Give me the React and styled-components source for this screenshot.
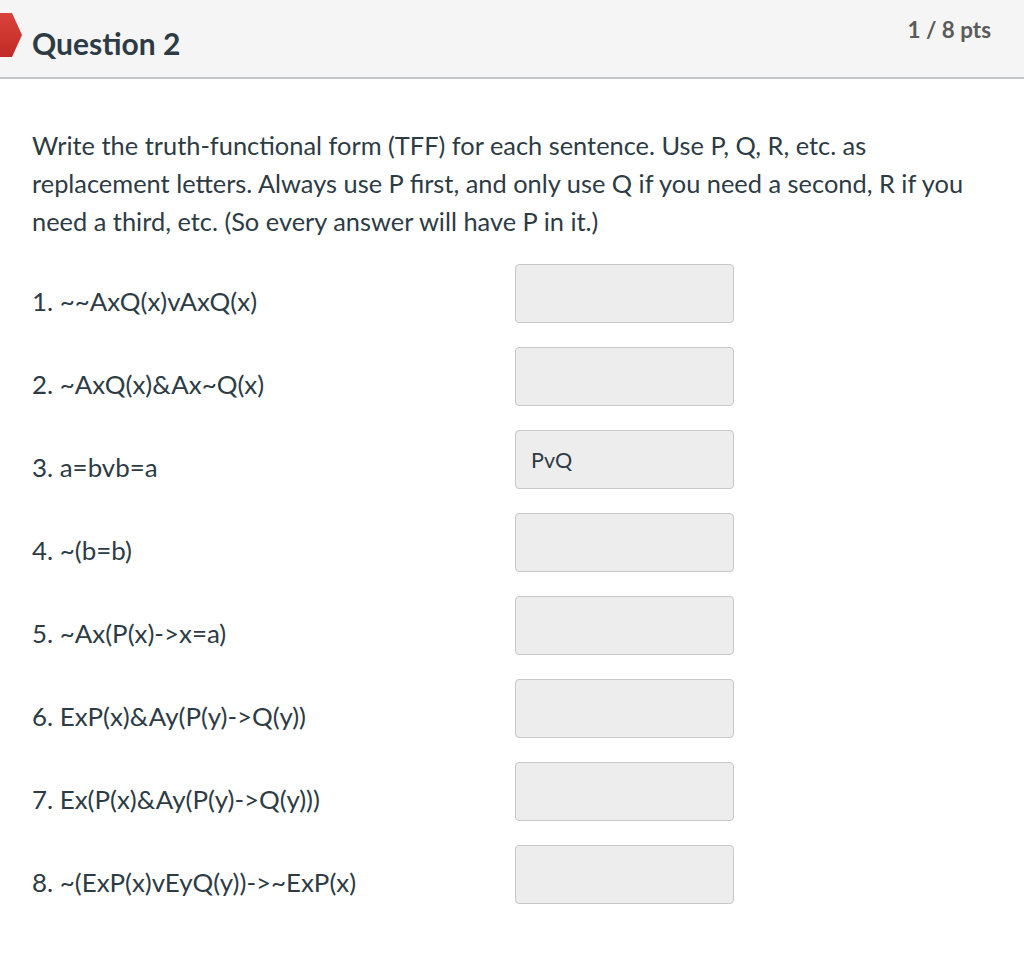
import React from "react"
import styled, { createGlobalStyle } from "styled-components"

const GlobalStyle = createGlobalStyle`
  html, body {
    margin: 0;
    padding: 0;
    background: #ffffff;
  }
  body {
    font-family: "Lato", "Noto Sans", sans-serif;
    color: #2d3b45;
  }
`

const Page = styled.div`
  width: 1024px;
  min-height: 956px;
  background: #ffffff;
`

const Header = styled.div`
  position: relative;
  height: 77px;
  background: #f5f5f5;
  border-bottom: 2px solid #c4c7c9;
  display: flex;
  justify-content: space-between;
  align-items: flex-start;
  padding: 0 32px;
`

const Marker = styled.svg`
  position: absolute;
  left: 0;
  top: 13px;
`

const Title = styled.h2`
  margin: 0;
  padding-top: 25px;
  font-size: 30px;
  font-weight: 700;
  line-height: 36px;
  color: #2d3b45;
`

const Points = styled.div`
  padding-top: 16px;
  font-size: 22.4px;
  font-weight: 700;
  line-height: 28px;
  color: #5a5a5a;
  margin-right: 1px;
`

const Body = styled.div`
  padding: 47px 32px 0 32px;
`

const Prompt = styled.p`
  margin: 0 0 24px 0;
  font-size: 25.4px;
  line-height: 38px;
  max-width: 960px;
`

const Answers = styled.div`
  display: flex;
  flex-direction: column;
  gap: 24px;
`

const Row = styled.div`
  display: grid;
  grid-template-columns: 483px 219px;
  align-items: center;
`

const Label = styled.div`
  font-size: 25.9px;
  line-height: 30px;
  padding-top: 14px;
`

const AnswerBox = styled.div`
  box-sizing: border-box;
  height: 59px;
  background: #ededed;
  border: 1px solid #c8c8c8;
  border-radius: 4px;
  padding: 0 15px;
  display: flex;
  align-items: center;
  font-size: 21.5px;
  color: #2d3b45;
`

const items = [
  { label: "1. ~~AxQ(x)vAxQ(x)", value: "" },
  { label: "2. ~AxQ(x)&Ax~Q(x)", value: "" },
  { label: "3. a=bvb=a", value: "PvQ" },
  { label: "4. ~(b=b)", value: "" },
  { label: "5. ~Ax(P(x)->x=a)", value: "" },
  { label: "6. ExP(x)&Ay(P(y)->Q(y))", value: "" },
  { label: "7. Ex(P(x)&Ay(P(y)->Q(y)))", value: "" },
  { label: "8. ~(ExP(x)vEyQ(y))->~ExP(x)", value: "" },
]

export default function App() {
  return (
    <Page>
      <GlobalStyle />
      <Header>
        <Marker width="23" height="45" viewBox="0 0 23 45">
          <defs>
            <linearGradient id="mk" x1="0" y1="0" x2="0" y2="1">
              <stop offset="0" stopColor="#d9433a" />
              <stop offset="1" stopColor="#c22a25" />
            </linearGradient>
          </defs>
          <polygon points="0,0 12,0 22,22 12,44 0,44" fill="url(#mk)" />
        </Marker>
        <Title>Question 2</Title>
        <Points>1 / 8 pts</Points>
      </Header>
      <Body>
        <Prompt>
          Write the truth-functional form (TFF) for each sentence. Use P, Q, R, etc. as
          replacement letters. Always use P first, and only use Q if you need a second, R if you
          need a third, etc. (So every answer will have P in it.)
        </Prompt>
        <Answers>
          {items.map((it) => (
            <Row key={it.label}>
              <Label>{it.label}</Label>
              <AnswerBox>{it.value}</AnswerBox>
            </Row>
          ))}
        </Answers>
      </Body>
    </Page>
  )
}
